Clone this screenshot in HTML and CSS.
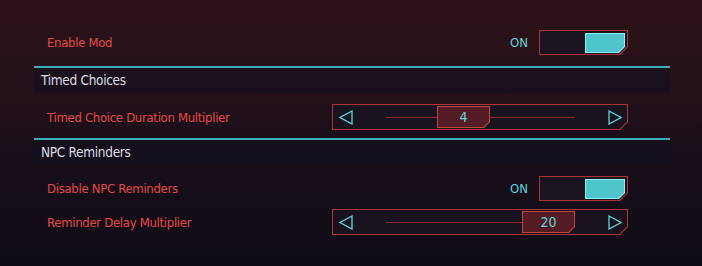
FILE: index.html
```html
<!DOCTYPE html>
<html lang="en">
<head>
    <meta charset="UTF-8">
    <meta name="viewport" content="width=device-width, initial-scale=1.0">
    <title>Mod Settings</title>
    <link rel="stylesheet" href="styles.css">
</head>
<body>
    <div class="panel">
        <div class="row row-first">
            <span class="label">Enable Mod</span>
            <div class="switch">
                <span class="state">ON</span>
                <div class="toggle"><div class="toggle-in"><div class="knob"><div class="knob-in"></div></div></div></div>
            </div>
        </div>

        <div class="group-title">Timed Choices</div>

        <div class="row row-slider">
            <span class="label">Timed Choice Duration Multiplier</span>
            <div class="slider">
                <div class="slider-in">
                    <svg class="arrow" width="14" height="15" viewBox="0 0 14 15"><polygon points="13,1 1,7.5 13,14" /></svg>
                    <div class="track">
                        <div class="thumb" style="left: calc((100% - 53px) * 0.375)"><div class="thumb-in">4</div></div>
                    </div>
                    <svg class="arrow" width="14" height="15" viewBox="0 0 14 15"><polygon points="1,1 13,7.5 1,14" /></svg>
                </div>
            </div>
        </div>

        <div class="group-title">NPC Reminders</div>

        <div class="row row-toggle">
            <span class="label">Disable NPC Reminders</span>
            <div class="switch">
                <span class="state">ON</span>
                <div class="toggle"><div class="toggle-in"><div class="knob"><div class="knob-in"></div></div></div></div>
            </div>
        </div>

        <div class="row row-last">
            <span class="label">Reminder Delay Multiplier</span>
            <div class="slider">
                <div class="slider-in">
                    <svg class="arrow" width="14" height="15" viewBox="0 0 14 15"><polygon points="13,1 1,7.5 13,14" /></svg>
                    <div class="track">
                        <div class="thumb" style="left: calc((100% - 53px) * 1)"><div class="thumb-in">20</div></div>
                    </div>
                    <svg class="arrow" width="14" height="15" viewBox="0 0 14 15"><polygon points="1,1 13,7.5 1,14" /></svg>
                </div>
            </div>
        </div>
    </div>
</body>
</html>
```

FILE: styles.css
```css
* {
    margin: 0;
    padding: 0;
    box-sizing: border-box;
}

html, body {
    height: 100%;
}

body {
    font-family: 'DejaVu Sans Condensed', 'DejaVu Sans', sans-serif;
    font-stretch: condensed;
    background: linear-gradient(180deg, #2d1219 0%, #26111a 30%, #180e19 58%, #100c17 100%);
    padding-top: 30px;
    overflow: hidden;
}

.panel {
    margin-left: 34px;
    width: 636px;
}

.row {
    display: flex;
    align-items: center;
    justify-content: space-between;
    padding: 0 42px 0 13px;
}

.row-first { margin-bottom: 11px; }
.row-slider { margin-top: 11px; margin-bottom: 8px; }
.row-toggle { margin-top: 11px; }
.row-last { margin-top: 8px; }

.label {
    color: #e24a4a;
    font-size: 13px;
    letter-spacing: -0.3px;
}

.group-title {
    border-top: 2px solid #3aadb3;
    background: rgba(18, 17, 32, 0.55);
    height: 27px;
    line-height: 25px;
    padding-left: 7px;
    color: #dcdce2;
    font-size: 13.5px;
    letter-spacing: -0.3px;
}

/* toggle */
.switch {
    display: flex;
    align-items: center;
    gap: 11px;
}

.state {
    color: #5fd6dc;
    font-size: 13px;
}

.toggle {
    width: 89px;
    height: 25px;
    padding: 1px;
    background: #a9343a;
    clip-path: polygon(0 0, 100% 0, 100% calc(100% - 8px), calc(100% - 8px) 100%, 0 100%);
}

.toggle-in {
    height: 100%;
    background: #1b1320;
    clip-path: polygon(0 0, 100% 0, 100% calc(100% - 7.6px), calc(100% - 7.6px) 100%, 0 100%);
    display: flex;
    justify-content: flex-end;
    padding: 2px 2px 1px;
}

.knob {
    width: 40px;
    height: 100%;
    padding: 1px;
    background: #8ff0f2;
    clip-path: polygon(0 0, 100% 0, 100% calc(100% - 6px), calc(100% - 6px) 100%, 0 100%);
}

.knob-in {
    height: 100%;
    background: #4ec4cb;
    clip-path: polygon(0 0, 100% 0, 100% calc(100% - 5.6px), calc(100% - 5.6px) 100%, 0 100%);
}

/* slider */
.slider {
    width: 296px;
    height: 26px;
    padding: 1px;
    background: #a9343a;
    clip-path: polygon(0 0, 100% 0, 100% calc(100% - 8px), calc(100% - 8px) 100%, 0 100%);
}

.slider-in {
    height: 100%;
    background: #19121f;
    clip-path: polygon(0 0, 100% 0, 100% calc(100% - 7.6px), calc(100% - 7.6px) 100%, 0 100%);
    display: flex;
    align-items: center;
    padding: 0 5px 0 6px;
}

.arrow polygon {
    fill: none;
    stroke: #5fd6dc;
    stroke-width: 1.3;
}

.track {
    flex: 1;
    margin: 0 33px;
    height: 22px;
    position: relative;
}

.track::before {
    content: '';
    position: absolute;
    left: 0;
    right: 0;
    top: 11px;
    height: 1px;
    background: #862a31;
}

.thumb {
    position: absolute;
    top: 0;
    width: 53px;
    height: 22px;
    padding: 1px;
    background: #c4443f;
    clip-path: polygon(0 0, 100% 0, 100% calc(100% - 6px), calc(100% - 6px) 100%, 0 100%);
}

.thumb-in {
    height: 100%;
    background: #541c24;
    clip-path: polygon(0 0, 100% 0, 100% calc(100% - 5.6px), calc(100% - 5.6px) 100%, 0 100%);
    color: #5fd6dc;
    font-size: 14px;
    line-height: 20px;
    text-align: center;
}
```
